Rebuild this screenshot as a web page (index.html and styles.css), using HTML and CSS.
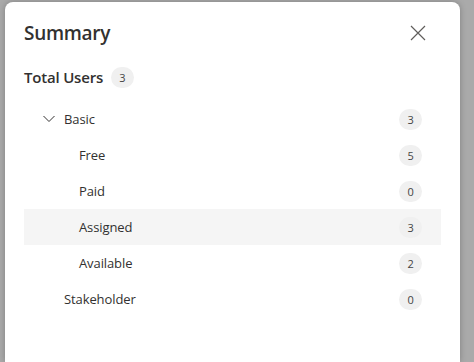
FILE: index.html
```html
<!DOCTYPE html>
<html>
<head>
    <title>Summary</title>
    <link rel="stylesheet" href="styles.css">
</head>
<body>
    <div class="backdrop">
        <div class="panel">
            <div class="panel-header">
                <h2>Summary</h2>
                <button class="close" aria-label="Close">
                    <svg width="16" height="16" viewBox="0 0 16 16">
                        <path d="M1 1 L15 15 M15 1 L1 15" stroke="#605e5c" stroke-width="1.2" fill="none"/>
                    </svg>
                </button>
            </div>

            <div class="total">
                <span class="total-label">Total Users</span>
                <span class="count">3</span>
            </div>

            <ul class="tree">
                <li class="row">
                    <span class="name">
                        <svg class="chevron" width="12" height="8" viewBox="0 0 12 8">
                            <path d="M0.5 1 L6 6.5 L11.5 1" stroke="#323130" stroke-width="1" fill="none"/>
                        </svg>
                        Basic
                    </span>
                    <span class="count">3</span>
                </li>
                <li class="row child"><span class="name">Free</span><span class="count">5</span></li>
                <li class="row child"><span class="name">Paid</span><span class="count">0</span></li>
                <li class="row child selected"><span class="name">Assigned</span><span class="count">3</span></li>
                <li class="row child"><span class="name">Available</span><span class="count">2</span></li>
                <li class="row leaf"><span class="name">Stakeholder</span><span class="count">0</span></li>
            </ul>
        </div>
    </div>
</body>
</html>
```

FILE: styles.css
```css
* {
    box-sizing: border-box;
}

body {
    margin: 0;
    height: 362px;
    overflow: hidden;
    background: #aaaaaa;
    font-family: 'Open Sans', sans-serif;
    color: #323130;
}

.backdrop {
    padding: 2px 14px 0 5px;
}

.panel {
    height: 360px;
    background: #fff;
    border-radius: 8px 8px 0 0;
    box-shadow: 0 0 6px rgb(0 0 0 / 25%);
    padding: 0 19px 0 19px;
}

.panel-header {
    display: flex;
    justify-content: space-between;
    align-items: center;
    height: 60px;
    padding-top: 2px;
}

.panel-header h2 {
    margin: 0;
    font-size: 19px;
    font-weight: 600;
    letter-spacing: -0.3px;
}

.close {
    border: none;
    background: none;
    padding: 0;
    margin-right: 15px;
    display: flex;
}

.total {
    display: flex;
    align-items: center;
    gap: 8px;
    height: 30px;
}

.total-label {
    font-size: 15px;
    font-weight: 600;
    letter-spacing: -0.2px;
}

.count {
    display: inline-flex;
    align-items: center;
    justify-content: center;
    min-width: 23px;
    height: 21px;
    border-radius: 11px;
    background: #f0f0f0;
    font-size: 11px;
    color: #444;
}

.tree {
    list-style: none;
    margin: 9px 0 0 0;
    padding: 0;
}

.row {
    display: flex;
    justify-content: space-between;
    align-items: center;
    height: 36px;
    padding: 0 19px 0 40px;
    font-size: 13px;
    letter-spacing: -0.1px;
}

.row:first-child {
    padding-left: 19px;
}

.row.child {
    padding-left: 55px;
}

.row.selected {
    background: #f5f5f5;
}

.name {
    display: flex;
    align-items: center;
}

.chevron {
    margin-right: 9px;
}
```
